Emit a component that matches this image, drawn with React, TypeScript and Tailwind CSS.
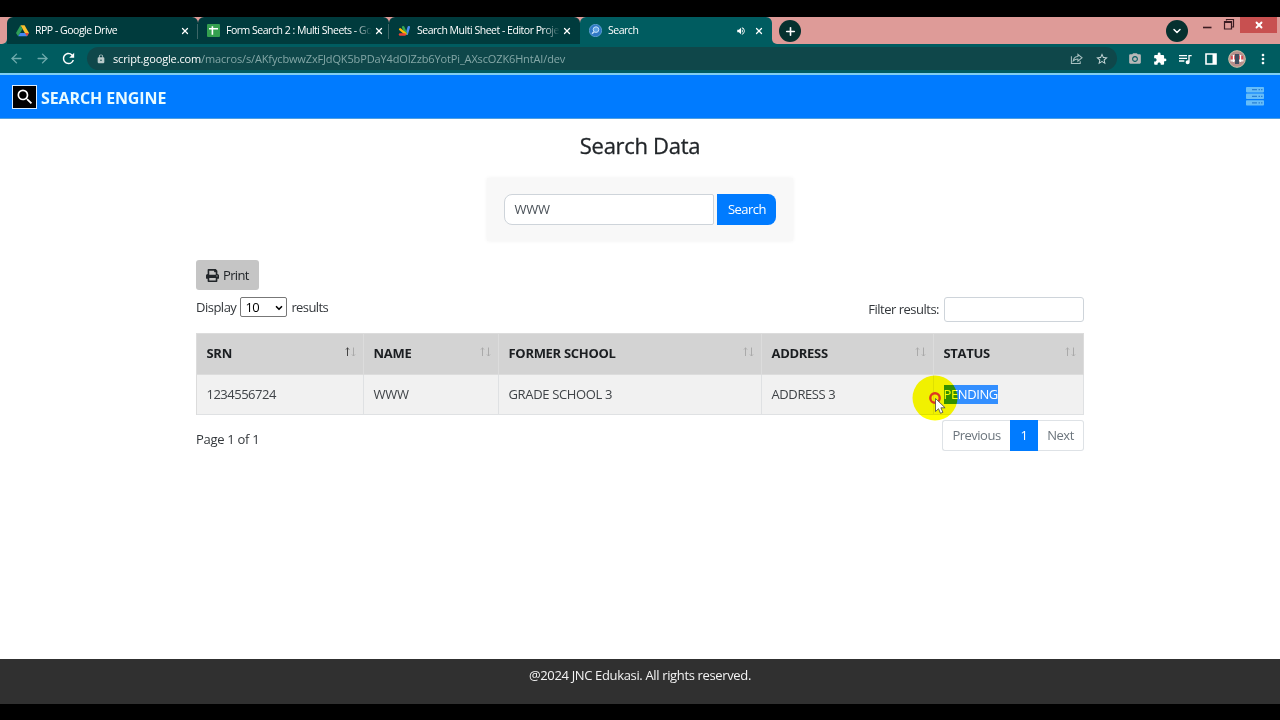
import React from "react";
import { FaPrint } from "react-icons/fa";
import { MdCameraAlt, MdExtension, MdLock, MdMoreVert, MdQueueMusic, MdRefresh, MdSearch, MdStarBorder, MdVolumeUp } from "react-icons/md";
import { ArrowLeft, ArrowRight, ChevronDown, Plus, X } from "lucide-react";

interface Tab {
  id: string;
  title: string;
  icon: React.ReactNode;
  width: string;
  fade?: boolean;
  active?: boolean;
  separator?: boolean;
}

const DriveIcon = () => (
  <svg viewBox="0 0 24 24" className="w-[13px] h-[13px] shrink-0">
    <path d="M8.2 2.5h7.6L24 16.5h-7.6z" fill="#fbc02d" />
    <path d="M8.2 2.5 12 9 3.9 22.5 0 16.5z" fill="#2e9e57" />
    <path d="M7.8 16.5H24l-3.8 6H3.9z" fill="#4688f4" />
    <path d="M16.4 16.5H24l-3.8 6z" fill="#e64a35" />
  </svg>
);

const SheetsIcon = () => (
  <svg viewBox="0 0 13 13" className="w-[13px] h-[13px] shrink-0">
    <rect width="13" height="13" rx="1" fill="#34a04f" />
    <path d="M2 4.7h9M5.4 2.3v8.5" stroke="#fff" strokeWidth="1.6" />
  </svg>
);

const ScriptIcon = () => (
  <svg viewBox="0 0 13 13" className="w-[13px] h-[13px] shrink-0" strokeLinecap="round" strokeWidth="2.5">
    <path d="M10.8 3.2 8.8 9.8" stroke="#4a8df0" />
    <path d="M5.2 3.2 8 9.6" stroke="#34a853" />
    <path d="M2.2 5.4 7.4 9.6" stroke="#fbbc04" />
    <path d="M2 10.4h4.8" stroke="#ea4335" />
  </svg>
);

const SearchFavicon = () => (
  <svg viewBox="0 0 13 13" className="w-[13px] h-[13px] shrink-0" fill="none">
    <circle cx="6.5" cy="6.5" r="6.2" fill="#2f78c4" stroke="#79b7ea" strokeWidth=".6" />
    <circle cx="7" cy="5.6" r="2.8" fill="#5fa3e2" stroke="#c4e0fa" strokeWidth="1" />
    <path d="M5 7.7 3 9.8" stroke="#c4e0fa" strokeWidth="1.3" />
  </svg>
);

const tabs: Tab[] = [
  { id: "drive", title: "RPP - Google Drive", icon: <DriveIcon />, width: "w-[191px]", separator: true },
  { id: "form", title: "Form Search 2 : Multi Sheets - Go", icon: <SheetsIcon />, width: "w-[191px]", fade: true, separator: true },
  { id: "editor", title: "Search Multi Sheet - Editor Proje", icon: <ScriptIcon />, width: "w-[191px]", fade: true },
  { id: "search", title: "Search", icon: <SearchFavicon />, width: "w-[192px]", active: true },
];

const TabStrip = () => (
  <div className="flex h-[27px] bg-[#005c60]">
    <div className="w-[7px] rounded-br-[5px] bg-[#de9b98]" />
    {tabs.map(tab => (
      <div key={tab.id} className={`bg-[#de9b98] ${tab.width}`}>
        <div
          className={`relative flex items-center h-[27px] rounded-t-[6px] pl-[9px] pr-[8px] text-white ${
            tab.active ? "bg-[#005c60]" : "bg-[#003b3d]"
          }`}
        >
          {tab.icon}
          <span
            className={`ml-[6px] flex-1 whitespace-nowrap text-[10.5px] tracking-[-0.48px] ${
              tab.fade ? "[mask-image:linear-gradient(to_right,black_88%,transparent)]" : ""
            }`}
          >
            {tab.title}
          </span>
          {tab.active && <MdVolumeUp className="w-[10px] h-[10px] mr-[6px] shrink-0" />}
          <X className="w-[10px] h-[10px] ml-[2px] shrink-0" strokeWidth={3} />
          {tab.separator && <span className="absolute right-0 top-[7px] w-px h-[15px] bg-[#3d6667]" />}
        </div>
      </div>
    ))}
    <div className="flex flex-1 rounded-bl-[5px] bg-[#de9b98]">
      <div className="flex items-center justify-center w-[22px] h-[22px] ml-[7px] mt-[3px] rounded-full bg-[#06312f] text-white">
        <Plus className="w-[13px] h-[13px]" strokeWidth={3} />
      </div>
      <div className="flex items-center justify-center w-[22px] h-[22px] ml-auto mt-[3px] rounded-full bg-[#06312f] text-white">
        <ChevronDown className="w-[12px] h-[12px]" strokeWidth={3} />
      </div>
      <svg viewBox="0 0 52 16" className="w-[52px] h-4" fill="none" stroke="#3b1c22">
        <path d="M15 10.5h8.500" strokeWidth="1.6" />
        <path d="M36.500 4.500h7v7.500h-7zM38.500 3.500v-1h7v7.500h-1.500M36.500 5.500h7" strokeWidth="1.2" />
      </svg>
      <div className="flex items-center justify-center w-[37px] h-4 mr-[3px] bg-[#c85050] text-white">
        <X className="w-[10px] h-[10px]" strokeWidth={4.5} />
      </div>
    </div>
  </div>
);

const Toolbar = () => (
  <div className="flex items-center h-[29px] bg-[#005c60] text-white">
    <ArrowLeft className="w-[15px] h-[15px] ml-[9px] text-[#6fabad]" strokeWidth={2.2} />
    <ArrowRight className="w-[15px] h-[15px] ml-[11px] text-[#6fabad]" strokeWidth={2.2} />
    <MdRefresh className="w-[17px] h-[17px] ml-[10px]" />
    <div className="flex items-center h-[23px] w-[1030px] ml-[10px] rounded-full bg-[#0f474a] pl-[9px]">
      <MdLock className="w-[10px] h-[10px] text-[#b9c9c9]" />
      <span className="ml-[7px] pt-px whitespace-nowrap text-[11px] tracking-[-0.14px] text-[#84a7a7]">
        <span className="text-white">script.google.com</span>
        /macros/s/AKfycbwwZxFJdQK5bPDaY4dOIZzb6YotPi_AXscOZK6HntAI/dev
      </span>
      <svg viewBox="0 0 14 14" className="w-[13px] h-[13px] ml-auto" fill="none" stroke="#a8c0c0" strokeWidth="1.1">
        <path d="M1.500 4.500v8h9.500v-2.500" />
        <path d="M3.500 9.500c.5-3.500 2.500-4.700 5-4.700V2.500L13 6.200 8.500 9.800V7.500c-2.200 0-3.700.5-5 2z" />
      </svg>
      <MdStarBorder className="w-[14px] h-[14px] ml-[12px] mr-[8px] text-[#c9d8d8]" />
    </div>
    <MdCameraAlt className="w-[14px] h-[14px] ml-[11px] text-[#b8b8b8]" />
    <MdExtension className="w-[14px] h-[14px] ml-[11px]" />
    <MdQueueMusic className="w-[16px] h-[16px] ml-[10px]" />
    <svg viewBox="0 0 12 12" className="w-[12px] h-[12px] ml-[12px]" fill="none">
      <path d="M1 1h10v10H1z" stroke="#fff" strokeWidth="1.6" />
      <path d="M7.500 1H11v10H7.500z" fill="#fff" />
    </svg>
    <svg viewBox="0 0 18 18" className="w-[18px] h-[18px] ml-[11px]">
      <circle cx="9" cy="9" r="8.300" fill="#b98f8c" stroke="#d3c3a8" />
      <path d="M3 6h12v4H3z" fill="#d84a50" />
      <path d="M2.500 9.500h13v2h-13z" fill="#f1e9e6" />
      <path d="M7 4h4v10H7z" fill="#3f4f60" />
      <path d="M5.500 5v7M12.500 5v7" stroke="#fff" strokeWidth="1.3" />
    </svg>
    <MdMoreVert className="w-[16px] h-[16px] ml-[9px]" />
  </div>
);

const Navbar = () => (
  <div className="flex items-center h-[46px] border-t-2 border-t-[#7fcdf0] border-b border-b-[#4f9fe0] bg-[#007bff] pl-[12px] pr-[16px]">
    <div className="flex items-center justify-center w-[25px] h-[24px] border border-[#d8ecff] bg-black text-white">
      <MdSearch className="w-[20px] h-[20px]" />
    </div>
    <span className="ml-[4px] pt-[2px] text-[16px] font-bold tracking-[-0.12px] text-[#e8fbff]">SEARCH ENGINE</span>
    <svg viewBox="0 0 18 19" className="w-[18px] h-[19px] ml-auto" fill="#66bdf8">
      {[0, 6.6, 13.2].map(y => (
        <g key={y}>
          <rect y={y} width="18" height="5.400" rx=".8" />
          <path d={`M6 ${y + 2.7}h5M12.500 ${y + 2.7}h1.500M15 ${y + 2.7}h1.500`} stroke="#2a80d4" strokeWidth="1.3" />
        </g>
      ))}
    </svg>
  </div>
);

const SortArrows = ({ sorted }: { sorted?: boolean }) => (
  <svg viewBox="0 0 11 10" className="w-[11px] h-[10px] -mt-[4px]" fill="none">
    <path d="M2.500 9V.5M1 2.500 2.500 1 4 2.500" stroke={sorted ? "#444" : "#aaa"} />
    <path d="M8.500.5V9M7 7.500 8.500 9 10 7.500" stroke="#aaa" />
  </svg>
);

const ClickHalo = () => (
  <svg viewBox="0 0 46 46" className="absolute -left-[32px] -top-[10px] w-[46px] h-[46px] mix-blend-multiply">
    <circle cx="23" cy="23" r="22.500" fill="#ffff00" />
  </svg>
);

// Pointer sits above the halo so the blend does not tint it
const Pointer = () => (
  <svg viewBox="0 0 46 46" className="absolute -left-[32px] -top-[10px] w-[46px] h-[46px]">
    <circle cx="23" cy="23" r="4.700" fill="none" stroke="#dd3820" strokeWidth="2.4" />
    <path d="M23.500 23.500v13l3-2.800 2 4.600 2.400-1-2-4.500h4.200z" fill="#fff" stroke="#444" strokeWidth=".8" />
  </svg>
);

const columns = [
  { label: "SRN", value: "1234556724", width: "w-[167px]", valueClass: "tracking-[-0.5px]", sorted: true },
  { label: "NAME", value: "WWW", width: "w-[135px]", valueClass: "tracking-[-0.3px]" },
  { label: "FORMER SCHOOL", value: "GRADE SCHOOL 3", width: "w-[263px]", valueClass: "tracking-[-0.35px]" },
  { label: "ADDRESS", value: "ADDRESS 3", width: "w-[172px]", valueClass: "tracking-[-0.4px]" },
  { label: "STATUS", value: "PENDING", width: "w-[150px]", valueClass: "tracking-[-0.4px]", selected: true },
];

const ResultsTable = () => (
  <table className="w-[888px] mt-[11px] table-fixed border-separate border-spacing-0 border-l border-t border-[#dcdcdc] text-[13px]">
    <thead>
      <tr className="h-[41px] bg-[#d3d3d3]">
        {columns.map(col => (
          <th key={col.label} className={`${col.width} border-r border-b border-[#dcdcdc] p-0 pl-[9.500px] pr-[7px]`}>
            <div className="flex items-center justify-between">
              <span className="font-bold tracking-[-0.3px] text-[#1b1e21]">{col.label}</span>
              <SortArrows sorted={col.sorted} />
            </div>
          </th>
        ))}
      </tr>
    </thead>
    <tbody>
      <tr className="h-[40px] bg-[#f1f1f1]">
        {columns.map(col => (
          <td key={col.label} className={`border-r border-b border-[#dfe1e3] p-0 pl-[9.500px] text-[#3f4347] ${col.valueClass}`}>
            {col.selected ? (
              <span className="relative block w-fit mb-px">
                <span className="block bg-[#338fff] leading-[19px] text-white">{col.value}</span>
                <ClickHalo />
                <Pointer />
              </span>
            ) : (
              col.value
            )}
          </td>
        ))}
      </tr>
    </tbody>
  </table>
);

const SearchCard = () => (
  <div className="flex w-[306px] h-[63px] mt-[16px] mx-auto px-[17px] py-[16px] bg-[#f8f8f8] shadow-[0_0_4px_rgba(0,0,0,0.06)]">
    <div className="flex items-center w-[210px] h-[31px] rounded-l-[8px] rounded-r-[2px] border border-[#ced4da] bg-white pl-[9.500px] pt-px text-[13px] tracking-[-0.3px] text-[#495057]">
      WWW
    </div>
    <button className="w-[59px] h-[31px] ml-[3px] pt-px pl-px rounded-r-[8px] bg-[#007bff] text-[13px] tracking-[-0.5px] text-white">Search</button>
  </div>
);

export default function App() {
  return (
    <div className="flex flex-col w-[1280px] h-[720px] overflow-hidden bg-black pt-[17px] font-['Open_Sans',sans-serif]">
      <TabStrip />
      <Toolbar />
      <Navbar />
      <main className="h-[540px] bg-white text-[#212529]">
        <div className="w-[888px] mx-auto pt-[10px]">
          <h1 className="h-[33px] text-center text-[22px] leading-[33px] tracking-[-0.3px] [-webkit-text-stroke:0.3px_#212529]">Search Data</h1>
          <SearchCard />
          <button className="flex items-center w-[63px] h-[30px] mt-[19px] pt-px pl-[10px] rounded-[3px] bg-[#c5c5c5] text-[13px] tracking-[-0.65px]">
            <FaPrint className="w-[13px] h-[13px] mr-[4px]" />
            Print
          </button>
          <div className="flex items-center justify-between h-[32px] text-[13px] tracking-[-0.5px] text-[#33373b]">
            <div className="flex items-center mt-[2px]">
              <span className="pt-px">Display</span>
              <div className="flex items-center justify-between w-[47px] h-[20px] mx-[4px] pt-px pl-[4px] pr-[2px] rounded-[2px] border border-[#777] bg-white text-black">
                10
                <ChevronDown className="w-[10px] h-[10px]" strokeWidth={4} />
              </div>
              <span className="pt-px tracking-[-0.6px]">results</span>
            </div>
            <div className="flex items-center mt-[6px]">
              <span className="pt-px">Filter results:</span>
              <div className="w-[140px] h-[25px] ml-[5px] rounded-[3px] border border-[#ced4da] bg-white" />
            </div>
          </div>
          <ResultsTable />
          <div className="flex justify-between mt-[5px] text-[13px] tracking-[-0.5px]">
            <span className="leading-[38px] tracking-[-0.3px] text-[#33373b]">Page 1 of 1</span>
            <div className="flex h-[31px] text-[#6c757d]">
              <span className="flex items-center justify-center w-[68px] pt-px rounded-l-[3px] border border-r-0 border-[#dee2e6]">Previous</span>
              <span className="flex items-center justify-center w-[28px] pt-px bg-[#007bff] text-white">1</span>
              <span className="flex items-center justify-center w-[46px] pt-px rounded-r-[3px] border border-l-0 border-[#dee2e6]">Next</span>
            </div>
          </div>
        </div>
      </main>
      <footer className="h-[45px] pt-[6px] bg-[#303030] text-center text-[13px] leading-[20px] tracking-[-0.35px] text-[#f3f3f3]">
        @2024 JNC Edukasi. All rights reserved.
      </footer>
    </div>
  );
}
